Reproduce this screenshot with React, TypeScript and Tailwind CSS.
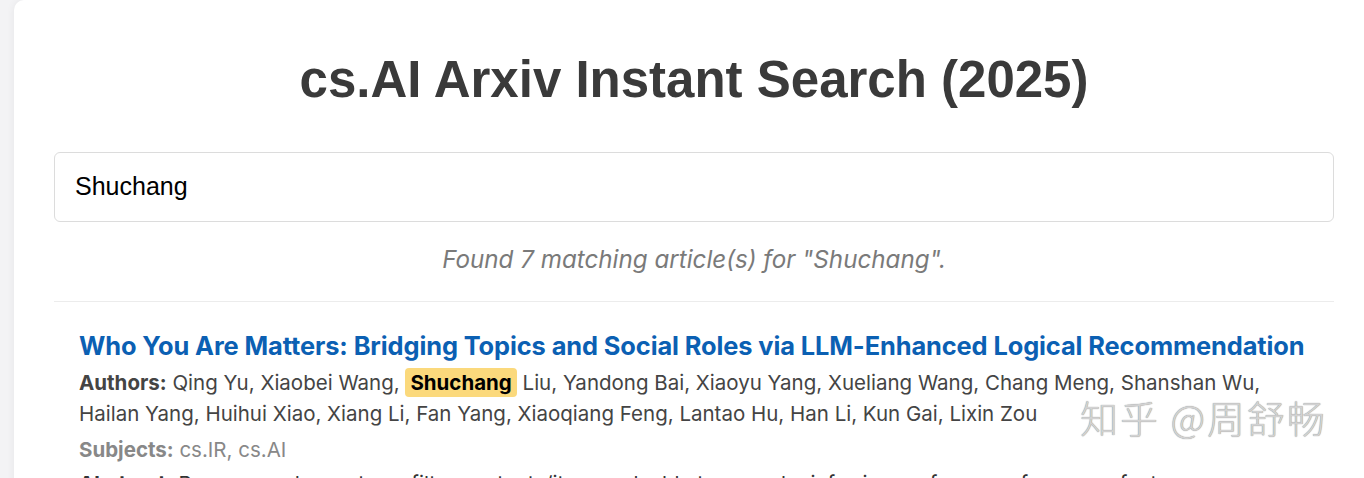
export default function App() {
  return (
    <div className="h-[478px] w-[1364px] overflow-hidden bg-[#f3f3f5] pl-[14px]">
      <div className="relative h-[520px] w-[1360px] rounded-[10px] bg-white px-10 pt-[50px] shadow-[0_0_8px_rgba(0,0,0,0.06)]">
        <h1 className="text-center font-['Liberation_Sans',Arial,sans-serif] text-[51px] font-bold leading-[60px] text-[#3a3a3a]">
          cs.AI Arxiv Instant Search (2025)
        </h1>

        <div className="mt-[42px] flex h-[70px] items-center rounded-md border border-[#dcdcdc] px-5">
          <span className="font-['Liberation_Sans',Arial,sans-serif] text-[25px] text-black">
            Shuchang
          </span>
        </div>

        <p className="mt-[21px] text-center font-['Inter',sans-serif] text-[24.2px] italic leading-[34px] text-[#7a7a7a]">
          Found 7 matching article(s) for "Shuchang".
        </p>

        <div className="mt-[24px] border-t border-[#ececec]" />

        <article className="px-[25px] pt-[26px] font-['Inter',sans-serif]">
          <h2 className="text-[25.4px] font-bold leading-[36px] tracking-[-0.1px] text-[#0b60b3]">
            Who You Are Matters: Bridging Topics and Social Roles via LLM-Enhanced Logical Recommendation
          </h2>
          <p className="mt-[3px] text-[20.5px] leading-[31px] text-[#444]">
            <b className="font-bold">Authors:</b> Qing Yu, Xiaobei Wang,{" "}
            <mark className="rounded-[4px] bg-[#fbd97c] px-[5px] py-[2px] font-bold text-black">Shuchang</mark>{" "}
            Liu, Yandong Bai, Xiaoyu Yang, Xueliang Wang, Chang Meng, Shanshan Wu,
            <br />
            Hailan Yang, Huihui Xiao, Xiang Li, Fan Yang, Xiaoqiang Feng, Lantao Hu, Han Li, Kun Gai, Lixin Zou
          </p>
          <p className="mt-[5px] text-[20.5px] leading-[31px] text-[#888]">
            <b className="font-bold">Subjects:</b> cs.IR, cs.AI
          </p>
          <p className="mt-[3px] text-[20.5px] leading-[31px] text-[#333]">
            <b className="font-bold">Abstract:</b> Recommender systems filter contents/items valuable to users by inferring preferences from user features
          </p>
        </article>

        <div className="absolute left-[1066px] top-[398px] font-['Noto_Sans_CJK_SC',sans-serif] text-[38px] font-light leading-none tracking-[2px] text-[#d2d2d2] [text-shadow:0_0_1px_#777]">
          知乎 @周舒畅
        </div>
      </div>
    </div>
  );
}
